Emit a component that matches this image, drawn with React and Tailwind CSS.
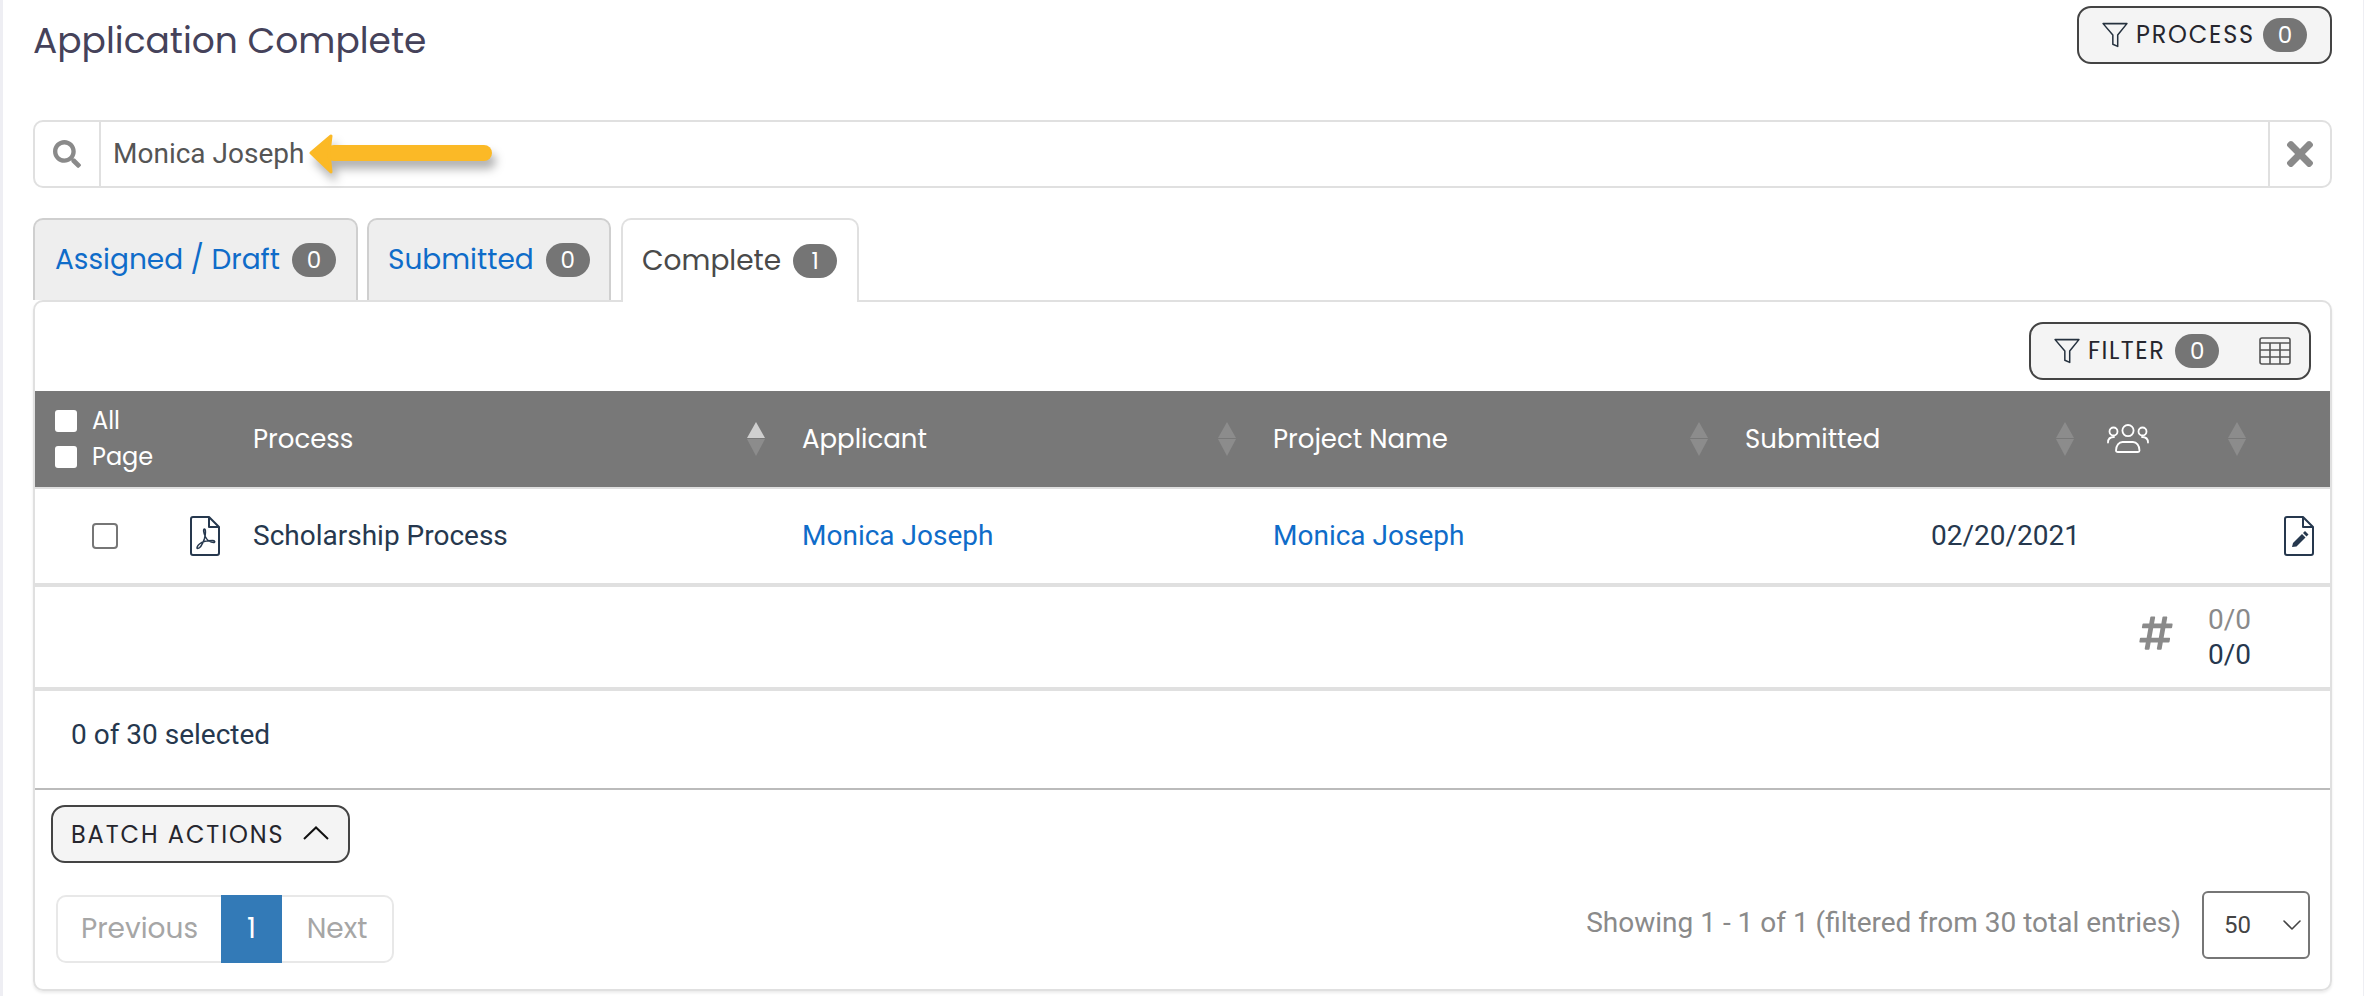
import React from 'react';
import { ChevronDown } from 'lucide-react';
import { FaSearch, FaTimes, FaHashtag } from 'react-icons/fa';

const Badge = ({ children, className = '' }) => (
    <span className={`inline-flex items-center justify-center w-[44px] h-[34px] rounded-full bg-[#757575] text-white text-[23px] tracking-normal font-['Poppins','Inter',sans-serif] ${className}`}>
        {children}
    </span>
);

const FunnelIcon = () => (
    <svg width="26" height="26" viewBox="0 0 24 24" fill="none" stroke="#26323f" strokeWidth="1.4" strokeLinejoin="round">
        <path d="M1 1.5h22L14.5 12v10.5l-4.5-2V12z" />
    </svg>
);

const TableIcon = () => (
    <svg width="32" height="28" viewBox="0 0 32 28" fill="none" stroke="#555" strokeWidth="1.6">
        <rect x="1" y="1" width="30" height="26" rx="2" />
        <path d="M1 6h30M1 13h30M1 20h30M11 6v21M21 6v21" />
    </svg>
);

const SortIcon = ({ active = false }) => (
    <svg width="18" height="34" viewBox="0 0 18 34" className="shrink-0">
        <path d="M9 0l9 16H0z" fill={active ? '#cfcfcf' : '#8c8c8c'} />
        <path d="M9 34L0 17h18z" fill="#8c8c8c" />
    </svg>
);

const PeopleIcon = () => (
    <svg width="42" height="30" viewBox="0 0 42 30" fill="none" stroke="#fff" strokeWidth="1.8" strokeLinecap="round">
        <circle cx="21" cy="6.6" r="5.6" />
        <circle cx="6.500" cy="7.500" r="4" />
        <circle cx="35.500" cy="7.500" r="4" />
        <path d="M11 28h20c1 0 1.500-.5 1.500-1.500 0-5-3-8.500-6.500-8.500H15.500c-3.500 0-6.500 3.500-6.500 8.500 0 1 .5 1.500 2 1.500z" />
        <path d="M1 18.500c0-3.500 2.500-5.500 6-5.500M41 18.500c0-3.500-2.500-5.500-6-5.500" />
    </svg>
);

const PdfIcon = () => (
    <svg width="30" height="40" viewBox="0 0 30 40" fill="none" stroke="#26384e" strokeWidth="2" strokeLinejoin="round">
        <path d="M3 1h16l10 10v26a2 2 0 0 1-2 2H3a2 2 0 0 1-2-2V3a2 2 0 0 1 2-2z" />
        <path d="M19 1v10h10" />
        <path strokeWidth="1.5" d="M14.500 13c-1.500 0-1 4 1 8 1.500 3 5 5.500 8 5.500 2 0 1.500-2-1-2-4 0-10 1-13 3.500-2.500 2-3 4.500-2 4.500 2 0 5-4 7-10 1-3.500 1.500-9.500 0-9.500z" />
    </svg>
);

const EditDocIcon = () => (
    <svg width="30" height="40" viewBox="0 0 30 40" fill="none" stroke="#26384e" strokeWidth="2" strokeLinejoin="round">
        <path d="M3 1h16l10 10v26a2 2 0 0 1-2 2H3a2 2 0 0 1-2-2V3a2 2 0 0 1 2-2z" />
        <path d="M19 1v10h10" />
        <path d="M8 31l1-4 9-9 3.500 3.500-9 9z" fill="#26384e" stroke="none" />
        <path d="M19 17l2-2 3.500 3.500-2 2z" fill="#26384e" stroke="none" />
    </svg>
);

const ArrowMark = () => (
    <svg width="190" height="60" viewBox="0 0 190 60" className="absolute left-[273px] top-[3px] drop-shadow-[4px_8px_5px_rgba(0,0,0,0.3)]">
        <path d="M176 28H26" stroke="#fbb926" strokeWidth="16" strokeLinecap="round" fill="none" />
        <path d="M3 28L23 11l-2 17 2 19z" fill="#fbb926" stroke="#fbb926" strokeWidth="3" strokeLinejoin="round" />
    </svg>
);

const poppins = "font-['Poppins','Inter',sans-serif]";
const roboto = "font-['Roboto',sans-serif]";

const App = () => {
    return (
        <div className={`w-[2364px] h-[996px] overflow-hidden bg-white border-l-[3px] border-r border-[#eeeef3] pl-[30px] pr-[31px] ${roboto}`}>
            {/* Title row */}
            <div className="flex justify-between h-[120px]">
                <h1 className={`mt-[19px] text-[36px] leading-[44px] text-[#45425a] ${poppins}`}>Application Complete</h1>
                <div className={`mt-[6px] flex items-center w-[255px] h-[58px] rounded-[14px] border-2 border-[#444] bg-[#f4f4f4] pl-[23px] text-[#26262e] text-[24px] tracking-[1.8px] ${poppins}`}>
                    <FunnelIcon />
                    <span className="ml-[8px]">PROCESS</span>
                    <Badge className="ml-[8px]">0</Badge>
                </div>
            </div>

            {/* Search */}
            <div className="relative flex items-stretch h-[68px] rounded-[10px] border-2 border-[#e0e0e0]">
                <div className="flex items-center justify-center w-[66px] border-r-2 border-[#e0e0e0]">
                    <FaSearch size={28} className="text-[#8a8a8a]" />
                </div>
                <div className="flex flex-1 items-center pl-[12px] text-[28px] text-[#555555]">Monica Joseph</div>
                <ArrowMark />
                <div className="flex items-center justify-center w-[62px] border-l-2 border-[#e0e0e0]">
                    <FaTimes size={38} className="text-[#8a8a8a]" />
                </div>
            </div>

            {/* Tabs */}
            <div className={`flex mt-[30px] h-[82px] text-[28px] ${poppins}`}>
                <div className="flex items-center w-[325px] pl-[20px] rounded-t-[10px] border-2 border-b-0 border-[#cfcfcf] bg-[#eeeeee] text-[#0f6cc9]">
                    Assigned / Draft <Badge className="ml-[12px]">0</Badge>
                </div>
                <div className="flex items-center w-[244px] ml-[9px] pl-[19px] rounded-t-[10px] border-2 border-b-0 border-[#cfcfcf] bg-[#eeeeee] text-[#0f6cc9]">
                    Submitted <Badge className="ml-[12px]">0</Badge>
                </div>
                <div className="relative z-10 flex items-center w-[238px] h-[84px] ml-[10px] pl-[19px] rounded-t-[10px] border-2 border-b-0 border-[#e0e0e0] bg-white text-[#4a4a4a]">
                    Complete <Badge className="ml-[12px]">1</Badge>
                </div>
            </div>

            {/* Card */}
            <div className="h-[691px] rounded-[10px] border-2 border-[#e0e0e0] shadow-[0_2px_3px_rgba(0,0,0,0.08)]">
                <div className="flex justify-end pt-[20px] pr-[19px]">
                    <div className={`flex items-center w-[282px] h-[58px] rounded-[14px] border-2 border-[#444] bg-[#f4f4f4] pl-[23px] text-[#26262e] text-[24px] tracking-[1.5px] ${poppins}`}>
                        <FunnelIcon />
                        <span className="ml-[8px]">FILTER</span>
                        <Badge className="ml-[10px]">0</Badge>
                        <span className="ml-[40px]"><TableIcon /></span>
                    </div>
                </div>

                {/* Header */}
                <div className={`mt-[11px] grid grid-cols-[218px_549px_471px_472px_348px_160px_1fr] items-center h-[96px] bg-[#787878] text-white text-[26px] ${poppins}`}>
                    <div className="flex flex-col gap-[6px] pl-[20px] text-[24px] leading-[30px]">
                        <label className="flex items-center gap-[15px]"><span className="w-[22px] h-[22px] rounded-[3px] bg-white" />All</label>
                        <label className="flex items-center gap-[15px]"><span className="w-[22px] h-[22px] rounded-[3px] bg-white" />Page</label>
                    </div>
                    <div className="flex items-center justify-between pr-[37px]">Process <SortIcon active /></div>
                    <div className="flex items-center justify-between pr-[37px]">Applicant <SortIcon /></div>
                    <div className="flex items-center justify-between pr-[37px]">Project Name <SortIcon /></div>
                    <div className="flex items-center justify-between pr-[19px]">Submitted <SortIcon /></div>
                    <div className="flex items-center justify-between pl-[14px] pr-[7px]"><PeopleIcon /> <SortIcon /></div>
                    <div />
                </div>

                {/* Row */}
                <div className="grid grid-cols-[218px_549px_471px_472px_348px_1fr] items-center h-[100px] border-t-[2px] border-b-[4px] border-t-[#e0e0e0] border-b-[#e0e0e0] text-[28px] text-[#26384e]">
                    <div className="flex items-center">
                        <span className="ml-[57px] w-[26px] h-[26px] rounded-[4px] border-2 border-[#767676]" />
                        <span className="ml-[72px]"><PdfIcon /></span>
                    </div>
                    <div>Scholarship Process</div>
                    <div className="text-[#0f6cc9]">Monica Joseph</div>
                    <div className="text-[#0f6cc9]">Monica Joseph</div>
                    <div className="pr-[13px] text-right">02/20/2021</div>
                    <div className="flex justify-end pr-[16px]"><EditDocIcon /></div>
                </div>

                {/* Totals */}
                <div className="flex items-center justify-end h-[104px] pr-[79px] border-b-[4px] border-[#e0e0e0]">
                    <FaHashtag size={38} className="text-[#8a8a8a] mr-[33px] mb-[8px]" />
                    <div className="text-[28px] leading-[35px]">
                        <div className="text-[#8a8a8a]">0/0</div>
                        <div className="text-[#26384e]">0/0</div>
                    </div>
                </div>

                <div className="flex items-center h-[99px] pb-[10px] pl-[36px] border-b-2 border-[#bbbbbb] text-[28px] text-[#26384e]">0 of 30 selected</div>

                {/* Footer */}
                <div className="flex justify-between">
                    <div className="pl-[16px] pt-[15px]">
                        <div className={`flex items-center w-[299px] h-[58px] rounded-[14px] border-2 border-[#444] bg-[#f4f4f4] pl-[18px] pt-[2px] text-[#26262e] text-[24px] tracking-[1.9px] ${poppins}`}>
                            BATCH ACTIONS
                            <svg width="26" height="14" viewBox="0 0 26 14" fill="none" stroke="#111" strokeWidth="2" className="ml-[18px] mb-[4px]">
                                <path d="M1 13L13 1.500 25 13" />
                            </svg>
                        </div>
                        <div className={`flex mt-[32px] ml-[5px] w-[338px] h-[68px] rounded-[10px] border-2 border-[#e8e8e8] text-[28px] text-[#a6a6a6] ${poppins}`}>
                            <div className="flex flex-1 items-center justify-center">Previous</div>
                            <div className="flex items-center justify-center w-[61px] -my-[2px] bg-[#337ab7] text-white">1</div>
                            <div className="flex w-[110px] items-center justify-center">Next</div>
                        </div>
                    </div>
                    <div className="flex items-center self-end mb-[4px] pr-[20px]">
                        <span className="text-[28px] text-[#8a8a8a] mr-[21px] mb-[4px]">Showing 1 - 1 of 1 (filtered from 30 total entries)</span>
                        <div className="flex items-center justify-between w-[108px] h-[68px] rounded-[6px] border-2 border-[#767676] pl-[20px] text-[24px] text-[#444]">
                            50 <ChevronDown size={32} strokeWidth={1.2} />
                        </div>
                    </div>
                </div>
            </div>
        </div>
    );
};

export default App;
